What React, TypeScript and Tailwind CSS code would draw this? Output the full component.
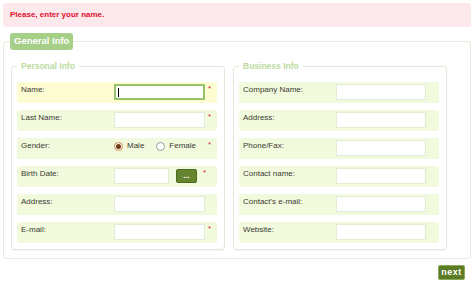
import React from "react";

const font = { fontFamily: '"Liberation Sans", Arial, sans-serif' };

function Star() {
  return <span className="ml-[3px] mt-[3px] text-[8px] leading-[8px] text-[#d9262c]">*</span>;
}

function TextInput({ w = "w-[91px]", focused = false }: { w?: string; focused?: boolean }) {
  if (focused) {
    return (
      <div className={`relative mt-[2px] h-[16px] ${w} border-2 border-[#98c36a] bg-white`}>
        <span className="absolute left-[2px] top-[2px] h-[9px] w-px bg-black" />
      </div>
    );
  }
  return <input className={`mt-[2px] h-[16px] ${w} border border-[#e2ebd4] bg-white outline-none`} />;
}

function Row({
  label,
  yellow = false,
  children,
}: {
  label: string;
  yellow?: boolean;
  children: React.ReactNode;
}) {
  return (
    <div className={`flex h-[21px] items-start rounded-[2px] pl-[4px] ${yellow ? "bg-[#fdfcd3]" : "bg-[#f1fadd]"}`}>
      <div className="w-[93px] pt-[3px] text-[8px] leading-[10px] text-[#3b3b33]">{label}</div>
      {children}
    </div>
  );
}

function Radio({ checked, label }: { checked?: boolean; label: string }) {
  return (
    <div className="flex items-center">
      <span
        className={`flex h-[9px] w-[9px] items-center justify-center rounded-full border bg-white ${
          checked ? "border-[#c98a4a]" : "border-[#9a9a9a]"
        }`}
      >
        {checked && <span className="h-[5px] w-[5px] rounded-full bg-[#6b3a12]" />}
      </span>
      <span className="ml-[4px] text-[8px] leading-[10px] text-[#3b3b33]">{label}</span>
    </div>
  );
}

function Box({ title, children }: { title: string; children: React.ReactNode }) {
  return (
    <fieldset className="w-[214px] rounded-[3px] border border-[#e3e8d8] pb-[6px] pl-[5px] pr-[7px] pt-[11px] shadow-[0_1px_1px_rgba(0,0,0,0.04)]">
      <legend className="px-[4px] text-[8.5px] font-bold leading-[10px] text-[#bcdba0]">{title}</legend>
      <div className="flex flex-col gap-[7px]">{children}</div>
    </fieldset>
  );
}

export default function App() {
  return (
    <div className="min-h-screen bg-white" style={font}>
      <div className="mx-[3px] pt-[3px]">
        <div className="flex h-[24px] items-center rounded-[3px] bg-[#fde9ec] pl-[7px] text-[8px] font-bold text-[#e2102c]">
          Please, enter your name.
        </div>
      </div>

      <fieldset className="mx-[3px] mt-[6px] rounded-[3px] border border-[#e6ebdc] pb-[8px] pl-[6px] pt-[11px]">
        <legend className="flex h-[17px] items-center rounded-[3px] bg-[#a6cf88] px-[4px] text-[9.5px] font-bold text-white">
          General Info
        </legend>
        <div className="ml-[1px] flex gap-[8px]">
          <Box title="Personal Info">
            <Row label="Name:" yellow>
              <TextInput focused />
              <Star />
            </Row>
            <Row label="Last Name:">
              <TextInput />
              <Star />
            </Row>
            <Row label="Gender:">
              <div className="mt-[3px] flex w-[91px] gap-[12px]">
                <Radio checked label="Male" />
                <Radio label="Female" />
              </div>
              <Star />
            </Row>
            <Row label="Birth Date:">
              <TextInput w="w-[55px]" />
              <button className="ml-[7px] mt-[3px] flex h-[14px] w-[21px] items-center justify-center rounded-[2px] border border-[#4d6b1f] bg-[#66842f] text-[8px] font-bold leading-none text-white">
                ...
              </button>
              <span className="ml-[6px] mt-[3px] text-[8px] leading-[8px] text-[#d9262c]">*</span>
            </Row>
            <Row label="Address:">
              <TextInput />
            </Row>
            <Row label="E-mail:">
              <TextInput />
              <Star />
            </Row>
          </Box>

          <Box title="Business Info">
            <Row label="Company Name:">
              <TextInput w="w-[90px]" />
            </Row>
            <Row label="Address:">
              <TextInput w="w-[90px]" />
            </Row>
            <Row label="Phone/Fax:">
              <TextInput w="w-[90px]" />
            </Row>
            <Row label="Contact name:">
              <TextInput w="w-[90px]" />
            </Row>
            <Row label="Contact's e-mail:">
              <TextInput w="w-[90px]" />
            </Row>
            <Row label="Website:">
              <TextInput w="w-[90px]" />
            </Row>
          </Box>
        </div>
      </fieldset>

      <div className="mr-[9px] mt-[6px] flex justify-end">
        <button className="flex h-[15px] w-[27px] items-center justify-center rounded-[2px] border border-[#8aa85a] bg-[#5c7c26] text-[9px] font-bold leading-none tracking-[0.5px] text-white">
          next
        </button>
      </div>
    </div>
  );
}
